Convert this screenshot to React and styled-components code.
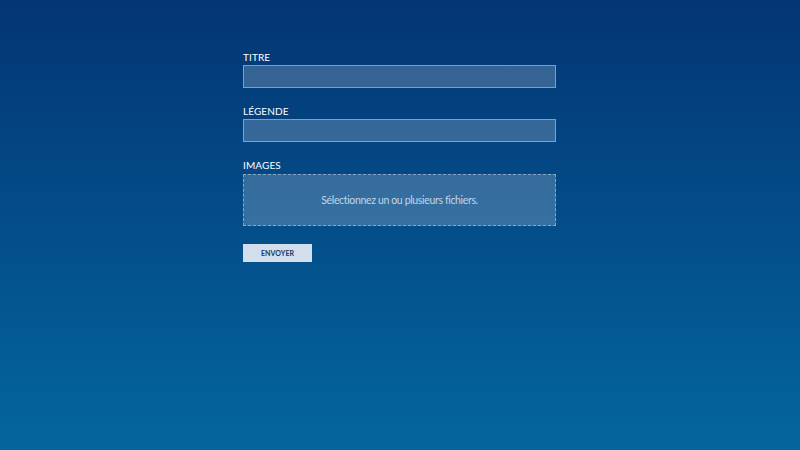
import React from "react";
import styled, { createGlobalStyle } from "styled-components";

const Global = createGlobalStyle`
  html, body { margin: 0; padding: 0; height: 100%; }
  body {
    font-family: Lato, "Open Sans", sans-serif;
    background: linear-gradient(to bottom, #033574 0%, #04669e 100%);
    min-height: 450px;
  }
  #root { min-height: 450px; }
`;

const Page = styled.div`
  min-height: 450px;
  display: flex;
  justify-content: center;
  padding: 51px 1px 0 0;
  box-sizing: border-box;
`;

const Form = styled.form`
  width: 313px;
  display: flex;
  flex-direction: column;
`;

const Field = styled.div`
  display: flex;
  flex-direction: column;
  gap: ${(p) => p.$gap || 2}px;
  margin-bottom: ${(p) => p.$mb || 17}px;
`;

const Label = styled.label`
  color: #ffffff;
  font-size: 10px;
  line-height: 12px;
  text-transform: uppercase;
  letter-spacing: 0.1px;
`;

const Input = styled.input`
  box-sizing: border-box;
  height: 23px;
  width: 100%;
  background: rgba(255, 255, 255, 0.2);
  border: 1px solid rgba(255, 255, 255, 0.38);
  outline: none;
  color: #fff;
  font-family: Lato, sans-serif;
  padding: 0 6px;
`;

const Drop = styled.div`
  box-sizing: border-box;
  height: 52px;
  background: rgba(255, 255, 255, 0.2);
  border: 1px dashed rgba(255, 255, 255, 0.4);
  display: flex;
  align-items: center;
  justify-content: center;
  color: #c3d5e8;
  font-size: 10.5px;
  letter-spacing: -0.35px;
`;

const Button = styled.button`
  align-self: flex-start;
  width: 69px;
  height: 18px;
  background: #d3deec;
  border: none;
  color: #123a66;
  font-family: Lato, sans-serif;
  font-weight: 700;
  font-size: 7px;
  letter-spacing: 0.1px;
  padding: 0;
  cursor: pointer;
`;

export default function App() {
  return (
    <>
      <Global />
      <Page>
        <Form onSubmit={(e) => e.preventDefault()}>
          <Field>
            <Label>Titre</Label>
            <Input type="text" />
          </Field>
          <Field>
            <Label>Légende</Label>
            <Input type="text" />
          </Field>
          <Field $gap={3} $mb={18}>
            <Label>Images</Label>
            <Drop>Sélectionnez un ou plusieurs fichiers.</Drop>
          </Field>
          <Button type="submit">ENVOYER</Button>
        </Form>
      </Page>
    </>
  );
}
